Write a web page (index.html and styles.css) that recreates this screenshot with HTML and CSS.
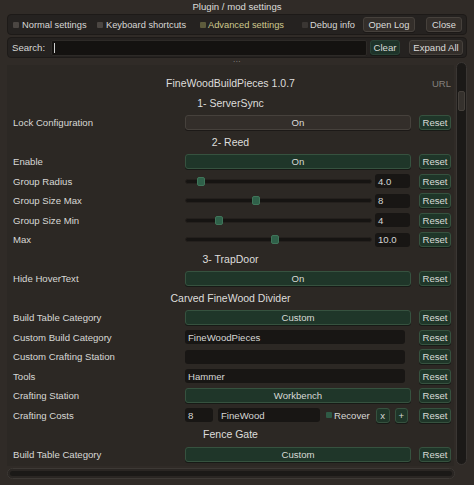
FILE: index.html
```html
<!DOCTYPE html>
<html>
<head>
<meta charset="utf-8">
<link rel="stylesheet" href="styles.css">
</head>
<body>
<div class="win">
  <div class="title">Plugin / mod settings</div>
  <div class="bar toolbar">
    <span class="cb"></span><span class="tl t-normal">Normal settings</span>
    <span class="cb"></span><span class="tl t-keys">Keyboard shortcuts</span>
    <span class="cb cb-on"></span><span class="tl tl-on t-adv">Advanced settings</span>
    <span class="cb cb-dark"></span><span class="tl t-debug">Debug info</span>
    <span class="btn btn-gray b-log">Open Log</span>
    <span class="btn btn-gray b-close">Close</span>
  </div>
  <div class="bar searchbar">
    <span class="search-label">Search:</span>
    <span class="search-input"><span class="caret"></span></span>
    <span class="btn btn-green b-clear">Clear</span>
    <span class="btn btn-gray b-expand">Expand All</span>
  </div>
  <div class="dots">...</div>
  <div class="main">
    <div class="content">
      <div class="head head-top"><span></span><span class="htext">FineWoodBuildPieces 1.0.7</span><span class="url">URL</span></div>
      <div class="head">1- ServerSync</div>
      <div class="row"><span class="label">Lock Configuration</span><span class="btn btn-gray wide">On</span><span class="btn btn-green reset">Reset</span></div>
      <div class="head">2- Reed</div>
      <div class="row"><span class="label">Enable</span><span class="btn btn-green wide">On</span><span class="btn btn-green reset">Reset</span></div>
      <div class="row"><span class="label">Group Radius</span><span class="slider"><span class="track"><span class="thumb" style="left:11px"></span></span><span class="input val">4.0</span></span><span class="btn btn-green reset">Reset</span></div>
      <div class="row"><span class="label">Group Size Max</span><span class="slider"><span class="track"><span class="thumb" style="left:66px"></span></span><span class="input val">8</span></span><span class="btn btn-green reset">Reset</span></div>
      <div class="row"><span class="label">Group Size Min</span><span class="slider"><span class="track"><span class="thumb" style="left:29px"></span></span><span class="input val">4</span></span><span class="btn btn-green reset">Reset</span></div>
      <div class="row"><span class="label">Max</span><span class="slider"><span class="track"><span class="thumb" style="left:85px"></span></span><span class="input val">10.0</span></span><span class="btn btn-green reset">Reset</span></div>
      <div class="head">3- TrapDoor</div>
      <div class="row"><span class="label">Hide HoverText</span><span class="btn btn-green wide">On</span><span class="btn btn-green reset">Reset</span></div>
      <div class="head">Carved FineWood Divider</div>
      <div class="row"><span class="label">Build Table Category</span><span class="btn btn-green wide">Custom</span><span class="btn btn-green reset">Reset</span></div>
      <div class="row"><span class="label">Custom Build Category</span><span class="field"><span class="input text">FineWoodPieces</span></span><span class="btn btn-green reset">Reset</span></div>
      <div class="row"><span class="label">Custom Crafting Station</span><span class="field"><span class="input text"></span></span><span class="btn btn-green reset">Reset</span></div>
      <div class="row"><span class="label">Tools</span><span class="field"><span class="input text">Hammer</span></span><span class="btn btn-green reset">Reset</span></div>
      <div class="row"><span class="label">Crafting Station</span><span class="btn btn-green wide">Workbench</span><span class="btn btn-green reset">Reset</span></div>
      <div class="row"><span class="label">Crafting Costs</span>
        <span class="costs">
          <span class="input amount">8</span>
          <span class="input item">FineWood</span>
          <span class="cb cb-green"></span><span class="recover">Recover</span>
          <span class="btn btn-green small b-x">x</span>
          <span class="btn btn-green small b-plus">+</span>
        </span>
        <span class="btn btn-green reset">Reset</span></div>
      <div class="head">Fence Gate</div>
      <div class="row"><span class="label">Build Table Category</span><span class="btn btn-green wide">Custom</span><span class="btn btn-green reset">Reset</span></div>
    </div>
    <div class="vscroll"><div class="vthumb"></div></div>
  </div>
  <div class="hscroll"></div>
</div>
</body>
</html>
```
FILE: styles.css
```css
* { box-sizing: border-box; }
html, body { margin: 0; padding: 0; }
body {
  width: 474px;
  height: 485px;
  overflow: hidden;
  background: #2f2a26;
  font-family: "Liberation Sans", Arial, sans-serif;
  font-size: 9.6px;
  color: #d8d8d6;
}
.win {
  width: 474px;
  height: 485px;
  background: #302b27;
  padding: 0 7px;
}
.title {
  height: 14px;
  line-height: 14px;
  text-align: center;
  color: #dcdcda;
  font-size: 9.6px;
}
.bar {
  height: 21px;
  background: #252220;
  border: 1px solid #1d1a18;
  border-radius: 4px;
  display: flex;
  align-items: center;
}
.toolbar { padding-left: 5px; font-size: 9.3px; }
.searchbar { margin-top: 2px; padding-left: 3px; }
.cb {
  width: 6px;
  height: 6px;
  background: #4b4642;
  border-radius: 1px;
  flex: none;
}
.cb-on { background: #5d5b3c; }
.cb-dark { background: #3a3633; }
.cb-green { background: #2f5a45; width: 6px; height: 6px; }
.tl { margin-left: 3px; white-space: nowrap; flex: none; }
.tl-on { color: #cfc98e; }
.t-normal { width: 75px; }
.t-keys { width: 94px; }
.t-adv { width: 94px; margin-left: 2px; }
.t-debug { width: 53px; margin-left: 2px; }
.btn {
  display: flex;
  align-items: center;
  justify-content: center;
  height: 15px;
  border-radius: 3px;
  white-space: nowrap;
  flex: none;
}
.btn-gray {
  background: #332e2a;
  border: 1px solid #46413c;
  box-shadow: 0 1px 0 #1c1917;
  color: #dcdcda;
}
.btn-green {
  background: #1f3629;
  border: 1px solid #36523f;
  box-shadow: 0 1px 0 #171a16;
  color: #d8dad6;
}
.b-log { width: 52px; }
.b-close { width: 36px; margin-left: 11px; }
.search-label { width: 40px; padding-left: 1px; }
.search-input {
  width: 316px;
  height: 16px;
  background: #141210;
  border: 1px solid #2d2a27;
  border-radius: 2px;
  display: flex;
  align-items: center;
  padding-left: 2px;
}
.caret { width: 1px; height: 10px; background: #cfcfcf; }
.b-clear { width: 30px; margin-left: 3px; background: #1d3329; border-color: #2a4236; }
.b-expand { width: 54px; margin-left: 9px; }
.dots {
  height: 7px;
  line-height: 4px;
  text-align: center;
  font-size: 8px;
  color: #9a9692;
  letter-spacing: 0.5px;
}
.main {
  display: flex;
  height: 402px;
}
.content {
  width: 448px;
  height: 401px;
  background: #2c2824;
  padding: 9px 0 0 6px;
  overflow: hidden;
}
.head {
  height: 19.5px;
  line-height: 19.5px;
  text-align: center;
  font-size: 10.5px;
  color: #dededc;
  margin-left: -6px;
}
.head-top {
  display: grid;
  grid-template-columns: 1fr auto 1fr;
}
.url {
  justify-self: end;
  padding-right: 3px;
  font-size: 9.5px;
  color: #85817d;
}
.row {
  display: flex;
  align-items: center;
  height: 19.5px;
}
.label { width: 172px; flex: none; white-space: nowrap; }
.wide { width: 226px; }
.reset { width: 32px; margin-left: 8px; }
.slider { width: 226px; display: flex; align-items: center; flex: none; }
.track {
  position: relative;
  width: 187px;
  height: 5px;
  background: #161412;
  border: 1px solid #24201d;
  border-radius: 3px;
}
.thumb {
  position: absolute;
  top: -3px;
  width: 8px;
  height: 9px;
  background: #2f6049;
  border: 1px solid #3f7559;
  border-radius: 2px;
}
.input {
  height: 14px;
  background: #181614;
  border-radius: 3px;
  display: flex;
  align-items: center;
  padding-left: 3px;
  white-space: nowrap;
  color: #d6d6d4;
  flex: none;
}
.val { width: 35px; margin-left: 3px; }
.field { width: 226px; flex: none; display: flex; }
.text { width: 220px; }
.costs { width: 226px; flex: none; display: flex; align-items: center; }
.amount { width: 28px; }
.item { width: 102px; margin-left: 5px; }
.costs .cb-green { margin-left: 6px; }
.recover { margin-left: 2px; }
.small { width: 14px; height: 15px; }
.b-x { margin-left: 6px; }
.b-plus { margin-left: 5px; width: 13px; }
.vscroll {
  width: 11px;
  height: 403px;
  margin-left: 2px;
  margin-top: -3px;
  background: #1b1917;
  border: 1px solid #3a3633;
  border-radius: 6px;
  padding-top: 28px;
}
.vthumb {
  width: 7px;
  height: 20px;
  margin-left: 1px;
  background: #35312d;
  border: 1px solid #45403b;
  border-radius: 2px;
}
.hscroll {
  width: 448px;
  height: 11px;
  margin-top: 1px;
  background: #1b1917;
  border: 1px solid #3d3935;
  border-radius: 6px;
  box-shadow: inset 0 0 0 2px #2a2623;
}
```
